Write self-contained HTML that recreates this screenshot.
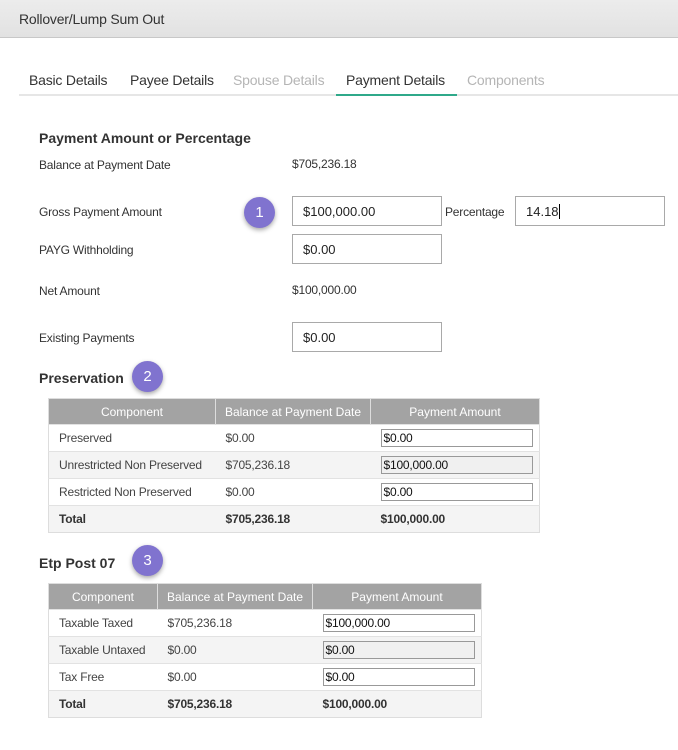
<!DOCTYPE html>
<html><head><style>
*{margin:0;padding:0;box-sizing:border-box}
body{width:678px;height:750px;background:#fff;font-family:"Liberation Sans",Arial,sans-serif;color:#333;position:relative;overflow:hidden}
.a{position:absolute;white-space:nowrap}
.hdr{left:0;top:0;width:678px;height:38px;background:linear-gradient(#ececec,#e2e2e2);border-bottom:1px solid #c8c8c8}
.t{font-size:14px;top:72px;letter-spacing:-0.2px}
.lbl{font-size:12px;color:#333;letter-spacing:-0.2px}
.inp{border:1px solid #a9a9a9;background:#fff;height:30px;font-size:13px;padding:7px 10px;color:#222}
.circ{width:31px;height:31px;border-radius:50%;background:#8073cf;color:#fff;font-size:15px;text-align:center;line-height:31px;box-shadow:0 2px 5px rgba(0,0,0,.35)}
table{position:absolute;border-collapse:collapse;font-size:12px;border:1px solid #ddd;table-layout:fixed}
th{background:#a3a3a3;color:#fff;font-weight:normal;height:26px;border-left:1px solid #ddd;text-align:center;white-space:nowrap;overflow:hidden}
td{height:27px;padding:0 10px;border-top:1px solid #e2e2e2;color:#444;white-space:nowrap;overflow:hidden;letter-spacing:-0.2px}
tr.g td{background:#f4f4f4}
tr.tot td{font-weight:bold;color:#333;background:#f4f4f4}
.ti{border:1px solid #999;height:18px;font-size:12px;padding:1px 2px;color:#111;background:#fff;width:152px}
.ti.d{background:#f0f0f0}
</style></head><body>
<div class="a hdr"></div>
<div class="a" style="left:19px;top:11px;font-size:14px;color:#333;letter-spacing:-0.2px">Rollover/Lump Sum Out</div>
<div class="a t" style="left:29px">Basic Details</div>
<div class="a t" style="left:130px">Payee Details</div>
<div class="a t" style="left:233px;color:#b5b5b5">Spouse Details</div>
<div class="a t" style="left:346px">Payment Details</div>
<div class="a t" style="left:467px;color:#b5b5b5">Components</div>
<div class="a" style="left:19px;top:94px;width:659px;height:2px;background:#e6e6e6"></div>
<div class="a" style="left:336px;top:94px;width:121px;height:2px;background:#2fa98a"></div>

<div class="a" style="left:39px;top:130px;font-size:14px;font-weight:bold;color:#333">Payment Amount or Percentage</div>
<div class="a lbl" style="left:39px;top:158px">Balance at Payment Date</div>
<div class="a lbl" style="left:292px;top:157px">$705,236.18</div>
<div class="a lbl" style="left:39px;top:205px">Gross Payment Amount</div>
<div class="a circ" style="left:244px;top:197px">1</div>
<div class="a inp" style="left:292px;top:196px;width:150px">$100,000.00</div>
<div class="a lbl" style="left:445px;top:205px">Percentage</div>
<div class="a inp" style="left:515px;top:196px;width:150px">14.18<span style="display:inline-block;width:1px;height:15px;background:#000;vertical-align:-3px"></span></div>
<div class="a lbl" style="left:39px;top:243px">PAYG Withholding</div>
<div class="a inp" style="left:292px;top:234px;width:150px">$0.00</div>
<div class="a lbl" style="left:39px;top:284px">Net Amount</div>
<div class="a lbl" style="left:292px;top:283px">$100,000.00</div>
<div class="a lbl" style="left:39px;top:331px">Existing Payments</div>
<div class="a inp" style="left:292px;top:322px;width:150px">$0.00</div>

<div class="a" style="left:39px;top:370px;font-size:14px;font-weight:bold">Preservation</div>
<div class="a circ" style="left:132px;top:361px">2</div>
<table style="left:48px;top:398px;width:492px">
<colgroup><col style="width:167px"><col style="width:155px"><col></colgroup>
<tr><th>Component</th><th>Balance at Payment Date</th><th>Payment Amount</th></tr>
<tr><td>Preserved</td><td>$0.00</td><td><div class="ti">$0.00</div></td></tr>
<tr class="g"><td>Unrestricted Non Preserved</td><td>$705,236.18</td><td><div class="ti d">$100,000.00</div></td></tr>
<tr><td>Restricted Non Preserved</td><td>$0.00</td><td><div class="ti">$0.00</div></td></tr>
<tr class="tot"><td>Total</td><td>$705,236.18</td><td>$100,000.00</td></tr>
</table>

<div class="a" style="left:39px;top:555px;font-size:14px;font-weight:bold">Etp Post 07</div>
<div class="a circ" style="left:132px;top:545px">3</div>
<table style="left:48px;top:583px;width:434px">
<colgroup><col style="width:109px"><col style="width:155px"><col></colgroup>
<tr><th>Component</th><th>Balance at Payment Date</th><th>Payment Amount</th></tr>
<tr><td>Taxable Taxed</td><td>$705,236.18</td><td><div class="ti">$100,000.00</div></td></tr>
<tr class="g"><td>Taxable Untaxed</td><td>$0.00</td><td><div class="ti d">$0.00</div></td></tr>
<tr><td>Tax Free</td><td>$0.00</td><td><div class="ti">$0.00</div></td></tr>
<tr class="tot"><td>Total</td><td>$705,236.18</td><td>$100,000.00</td></tr>
</table>
</body></html>
